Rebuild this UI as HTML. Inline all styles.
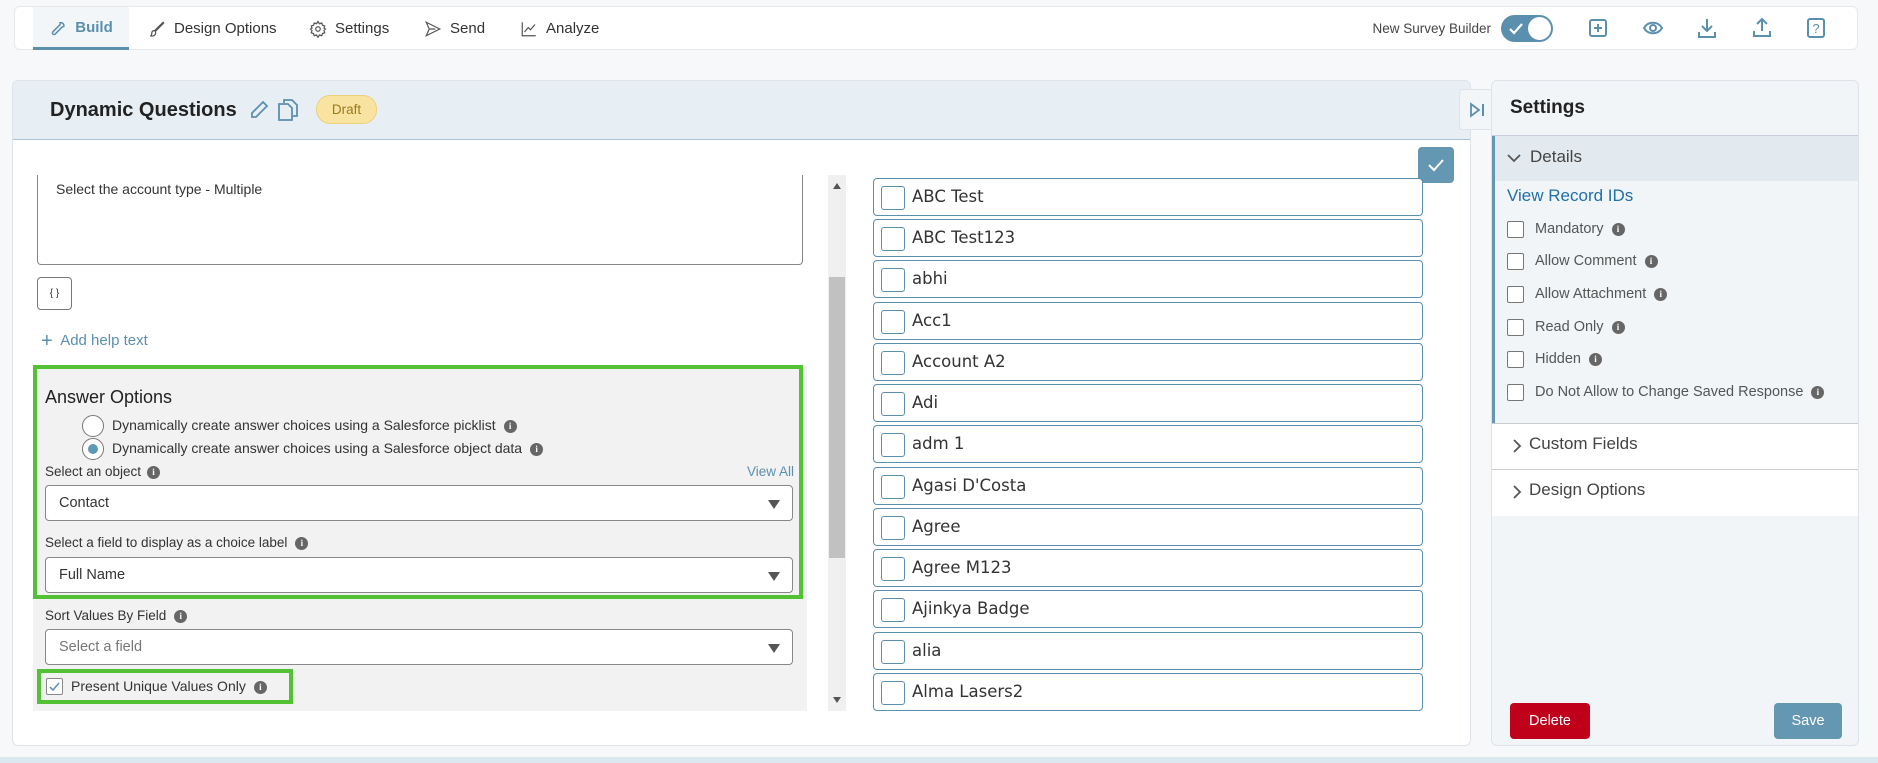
<!DOCTYPE html>
<html><head><meta charset="utf-8"><style>
*{box-sizing:border-box;margin:0;padding:0}
body{width:1878px;height:763px;background:#f7f8fa;font-family:"Liberation Sans",sans-serif;color:#333;position:relative;overflow:hidden}
.a{position:absolute}
.nav{left:14px;top:6px;width:1844px;height:44px;background:#fff;border:1px solid #e6e8eb;border-radius:6px}
.tab{position:absolute;top:0;height:43px;display:flex;align-items:center;font-size:15px;color:#333;gap:8px}
.ic{stroke:#555;fill:none;stroke-width:1.6}
.ti{stroke:#5b8fae;fill:none;stroke-width:2}
.main{left:12px;top:80px;width:1459px;height:666px;background:#fff;border:1px solid #dde3e8;border-radius:6px;overflow:hidden}
.mh{left:0;top:0;width:100%;height:59px;background:#e8eff4;border-bottom:1px solid #a9c4d6}
.item{position:absolute;left:873px;width:550px;height:38px;border:1px solid #5b8fae;border-radius:4px;background:#fff}
.item i{position:absolute;left:7px;top:7px;width:24px;height:24px;border:1px solid #5b8fae;border-radius:3px}
.item span{position:absolute;left:38px;top:8px;color:#333;font-family:"DejaVu Sans","Liberation Sans",sans-serif;font-size:16.5px}
.inf{display:inline-block;width:13px;height:13px;border-radius:50%;background:#666;color:#fff;font-size:9px;font-weight:bold;text-align:center;line-height:13px;vertical-align:middle;margin-left:8px;font-family:"Liberation Serif",serif}
.sel{position:absolute;left:44px;width:748px;height:36px;border:1px solid #888;border-radius:4px;background:#fff;font-size:14.5px;padding:9px 13px}
.sel:after{content:"";position:absolute;right:12px;top:14px;border-left:6px solid transparent;border-right:6px solid transparent;border-top:9px solid #555}
.lbl{position:absolute;left:44px;font-size:13.5px;color:#333}
.cb{position:absolute;left:1507px;width:17px;height:17px;border:1px solid #777;border-radius:2px;background:#fff}
.cl{position:absolute;left:1535px;font-size:14.5px;color:#555}
</style></head><body>
<div class="a nav">
 <div class="tab" style="left:18px;width:96px;justify-content:center;background:#f3f6f8;border-bottom:3px solid #5b8fae;color:#5b8fae;font-weight:bold">
  <svg width="18" height="18" viewBox="0 0 24 24" class="ti"><path d="M14.7 6.3a4 4 0 0 1 5 5l-2 .6-9.5 9.5a2 2 0 0 1-3-3l9.5-9.5.6-2a4 4 0 0 1-.6-.6z"/></svg>Build</div>
 <div class="tab" style="left:133px"><svg width="18" height="18" viewBox="0 0 24 24" class="ic"><path d="M20 3 9 14l1 1L21 4zM9 14c-3 0-4 2-4 4s-1 3-2 3c3 1 8 0 7-5z"/></svg>Design Options</div>
 <div class="tab" style="left:294px"><svg width="18" height="18" viewBox="0 0 24 24" class="ic"><circle cx="12" cy="12" r="3"/><path d="M12 2l2 3 3-1 1 3 3 1-1 3 2 1-2 2 1 3-3 1-1 3-3-1-2 3-2-3-3 1-1-3-3-1 1-3-2-2 2-1-1-3 3-1 1-3 3 1z"/></svg>Settings</div>
 <div class="tab" style="left:409px"><svg width="18" height="18" viewBox="0 0 24 24" class="ic"><path d="M3 3l18 9-18 9 4-9zM7 12h8"/></svg>Send</div>
 <div class="tab" style="left:505px"><svg width="18" height="18" viewBox="0 0 24 24" class="ic"><path d="M3 3v18h18M6 16l5-6 3 3 6-7"/></svg>Analyze</div>
 <div class="a" style="right:366px;top:14px;font-size:13.5px;color:#444">New Survey Builder</div>
 <div class="a" style="left:1486px;top:8px;width:52px;height:27px;border-radius:14px;background:#5b8fae">
  <svg class="a" style="left:8px;top:7px" width="14" height="13" viewBox="0 0 14 13"><path d="M1 7l4 4 8-9" stroke="#fff" stroke-width="2.2" fill="none"/></svg>
  <div class="a" style="left:27px;top:2px;width:23px;height:23px;border-radius:50%;background:#fff"></div></div>
 <svg class="a" style="left:1573px;top:11px" width="20" height="20" viewBox="0 0 20 20"><rect x="2" y="2" width="16" height="16" rx="2" stroke="#5b8fae" stroke-width="2" fill="none"/><path d="M10 6v8M6 10h8" stroke="#5b8fae" stroke-width="2"/></svg>
 <svg class="a" style="left:1627px;top:11px" width="22" height="20" viewBox="0 0 22 20"><path d="M2 10c4-7 14-7 18 0-4 7-14 7-18 0z" stroke="#5b8fae" stroke-width="2" fill="none"/><circle cx="11" cy="10" r="3" stroke="#5b8fae" stroke-width="2" fill="none"/></svg>
 <svg class="a" style="left:1682px;top:10px" width="20" height="22" viewBox="0 0 20 22"><path d="M10 2v12M5 9l5 5 5-5M2 15v5h16v-5" stroke="#5b8fae" stroke-width="2" fill="none"/></svg>
 <svg class="a" style="left:1737px;top:9px" width="20" height="22" viewBox="0 0 20 22"><path d="M10 15V3M5 8l5-5 5 5M2 15v5h16v-5" stroke="#5b8fae" stroke-width="2" fill="none"/></svg>
 <svg class="a" style="left:1791px;top:10px" width="20" height="22" viewBox="0 0 20 22"><rect x="2" y="2" width="16" height="18" rx="2" stroke="#5b8fae" stroke-width="2" fill="none"/><text x="10" y="16" font-size="13" text-anchor="middle" fill="#5b8fae" font-family="Liberation Sans">?</text></svg>
</div>

<div class="a main">
 <div class="a mh">
  <div class="a" style="left:37px;top:18px;font-size:20px;font-weight:bold;color:#222">Dynamic Questions</div>
  <svg class="a" style="left:236px;top:19px" width="20" height="20" viewBox="0 0 20 20"><path d="M14 2l4 4-11 11H3v-4z" stroke="#5b8fae" stroke-width="1.8" fill="none"/></svg>
  <svg class="a" style="left:264px;top:17px" width="22" height="24" viewBox="0 0 22 24"><path d="M7 5V2h8l5 5v11h-4M2 6h9l4 4v12H2z" stroke="#5b8fae" stroke-width="1.8" fill="none"/></svg>
  <div class="a" style="left:303px;top:14px;width:61px;height:29px;border-radius:14px;background:#f8e3a0;border:1px solid #ecd17a;color:#9a7a1e;font-size:13.5px;text-align:center;line-height:27px">Draft</div>
 </div>
 <div class="a" style="left:1405px;top:66px;width:36px;height:36px;border-radius:4px;background:#6497b1"><svg class="a" style="left:10px;top:11px" width="16" height="14" viewBox="0 0 16 14"><path d="M1 7l5 5 9-10" stroke="#fff" stroke-width="2" fill="none"/></svg></div>
 <div class="a" style="left:0;top:94px;width:815px;height:536px;overflow:hidden">
  <div class="a" style="left:24px;top:0;width:766px;height:90px;border:1px solid #888;border-top:none;border-radius:0 0 4px 4px;font-size:14px;padding:6px 18px">Select the account type - Multiple</div>
  <div class="a" style="left:24px;top:102px;width:35px;height:33px;border:1px solid #777;border-radius:4px;font-size:10px;text-align:center;line-height:31px">{ }</div>
  <div class="a" style="left:28px;top:155px;font-size:15px;color:#5b8fae"><span style="font-size:20px;vertical-align:-2px">+</span>&nbsp; Add help text</div>
  <div class="a" style="left:20px;top:190px;width:774px;height:360px;background:#f2f2f2"></div>
  <div class="a" style="left:20px;top:190px;width:770px;height:234px;border:4px solid #52c234"></div>
  <div class="a" style="left:32px;top:212px;font-size:18px;color:#222">Answer Options</div>
  <div class="a" style="left:69px;top:240px;width:22px;height:22px;border-radius:50%;border:1px solid #777;background:#fff"></div>
  <div class="a" style="left:99px;top:242px;font-size:14px">Dynamically create answer choices using a Salesforce picklist<span class="inf">i</span></div>
  <div class="a" style="left:69px;top:263px;width:22px;height:22px;border-radius:50%;border:1px solid #777;background:#fff"><div class="a" style="left:5px;top:5px;width:10px;height:10px;border-radius:50%;background:#5b99b8"></div></div>
  <div class="a" style="left:99px;top:265px;font-size:14px">Dynamically create answer choices using a Salesforce object data<span class="inf">i</span></div>
  <div class="lbl" style="top:289px;left:32px">Select an object<span class="inf" style="margin-left:6px">i</span></div>
  <div class="a" style="left:734px;top:289px;font-size:13.5px;color:#5b8fae">View All</div>
  <div class="sel" style="top:310px;left:32px;width:748px">Contact</div>
  <div class="lbl" style="top:360px;left:32px">Select a field to display as a choice label<span class="inf">i</span></div>
  <div class="sel" style="top:382px;left:32px">Full Name</div>
  <div class="lbl" style="top:433px;left:32px">Sort Values By Field<span class="inf">i</span></div>
  <div class="sel" style="top:454px;left:32px;color:#777">Select a field</div>
  <div class="a" style="left:24px;top:494px;width:256px;height:35px;border:4px solid #52c234"></div>
  <div class="a" style="left:33px;top:503px;width:17px;height:17px;border:1px solid #888;border-radius:2px;background:#fff"><svg width="15" height="15" viewBox="0 0 15 15"><path d="M3 8l3 3 6-7" stroke="#5b8fae" stroke-width="1.5" fill="none"/></svg></div>
  <div class="a" style="left:58px;top:503px;font-size:14px">Present Unique Values Only<span class="inf">i</span></div>
 </div>
 <div class="a" style="left:815px;top:94px;width:18px;height:536px;background:#f0f0f0"><div class="a" style="left:1px;top:102px;width:16px;height:281px;background:#c1c1c1"></div>
  <div class="a" style="left:5px;top:8px;border-left:4px solid transparent;border-right:4px solid transparent;border-bottom:6px solid #555"></div>
  <div class="a" style="left:5px;top:522px;border-left:4px solid transparent;border-right:4px solid transparent;border-top:6px solid #555"></div></div>
</div>

<div class="item" style="top:178px"><i></i><span>ABC Test</span></div>
<div class="item" style="top:219px"><i></i><span>ABC Test123</span></div>
<div class="item" style="top:260px"><i></i><span>abhi</span></div>
<div class="item" style="top:302px"><i></i><span>Acc1</span></div>
<div class="item" style="top:343px"><i></i><span>Account A2</span></div>
<div class="item" style="top:384px"><i></i><span>Adi</span></div>
<div class="item" style="top:425px"><i></i><span>adm 1</span></div>
<div class="item" style="top:467px"><i></i><span>Agasi D'Costa</span></div>
<div class="item" style="top:508px"><i></i><span>Agree</span></div>
<div class="item" style="top:549px"><i></i><span>Agree M123</span></div>
<div class="item" style="top:590px"><i></i><span>Ajinkya Badge</span></div>
<div class="item" style="top:632px"><i></i><span>alia</span></div>
<div class="item" style="top:673px"><i></i><span>Alma Lasers2</span></div>

<div class="a" style="left:1459px;top:89px;width:34px;height:41px;background:#f3f6f9;border:1px solid #dde3e8;border-right:none;border-radius:4px 0 0 4px">
 <svg class="a" style="left:9px;top:12px" width="18" height="16" viewBox="0 0 18 16"><path d="M2 2l8 6-8 6z" stroke="#5b8fae" stroke-width="1.8" fill="none"/><path d="M14 2v12" stroke="#5b8fae" stroke-width="2"/></svg></div>
<div class="a" style="left:1491px;top:80px;width:368px;height:666px;background:#f1f5f8;border:1px solid #dde3e8;border-radius:6px;overflow:hidden">
 <div class="a" style="left:18px;top:16px;font-size:19px;font-weight:bold;color:#222">Settings</div>
 <div class="a" style="left:0;top:54px;width:368px;height:1px;background:#ccd"></div>
 <div class="a" style="left:0;top:55px;width:3px;height:287px;background:#6497b1"></div>
 <div class="a" style="left:3px;top:55px;width:365px;height:45px;background:#e3eaef"></div>
 <svg class="a" style="left:14px;top:71px" width="16" height="12" viewBox="0 0 16 12"><path d="M2 3l6 6 6-6" stroke="#555" stroke-width="1.8" fill="none"/></svg>
 <div class="a" style="left:38px;top:66px;font-size:17px;color:#444">Details</div>
 <div class="a" style="left:15px;top:105px;font-size:17px;color:#1f6fa8">View Record IDs</div>
 <div class="a" style="left:0;top:342px;width:368px;height:93px;background:#fff;border-top:1px solid #ccc"></div>
 <div class="a" style="left:0;top:388px;width:368px;height:1px;background:#ccc"></div>
 <svg class="a" style="left:20px;top:357px" width="10" height="16" viewBox="0 0 10 16"><path d="M2 2l6 6-6 6" stroke="#555" stroke-width="1.8" fill="none"/></svg>
 <div class="a" style="left:37px;top:353px;font-size:17px;color:#444">Custom Fields</div>
 <svg class="a" style="left:20px;top:403px" width="10" height="16" viewBox="0 0 10 16"><path d="M2 2l6 6-6 6" stroke="#555" stroke-width="1.8" fill="none"/></svg>
 <div class="a" style="left:37px;top:399px;font-size:17px;color:#444">Design Options</div>
 <div class="a" style="left:18px;top:622px;width:80px;height:36px;border-radius:4px;background:#c0001a;color:#fff;font-size:14.5px;text-align:center;line-height:36px">Delete</div>
 <div class="a" style="left:282px;top:622px;width:68px;height:36px;border-radius:4px;background:#6497b1;color:#fff;font-size:14.5px;text-align:center;line-height:36px">Save</div>
</div>
<div class="cb" style="top:221px"></div><div class="cl" style="top:221px">Mandatory<span class="inf">i</span></div>
<div class="cb" style="top:253px"></div><div class="cl" style="top:253px">Allow Comment<span class="inf">i</span></div>
<div class="cb" style="top:286px"></div><div class="cl" style="top:286px">Allow Attachment<span class="inf">i</span></div>
<div class="cb" style="top:319px"></div><div class="cl" style="top:319px">Read Only<span class="inf">i</span></div>
<div class="cb" style="top:351px"></div><div class="cl" style="top:351px">Hidden<span class="inf">i</span></div>
<div class="cb" style="top:384px"></div><div class="cl" style="top:384px">Do Not Allow to Change Saved Response<span class="inf">i</span></div>
<div class="a" style="left:0;top:757px;width:1878px;height:6px;background:#dbe8f0"></div>
</body></html>
